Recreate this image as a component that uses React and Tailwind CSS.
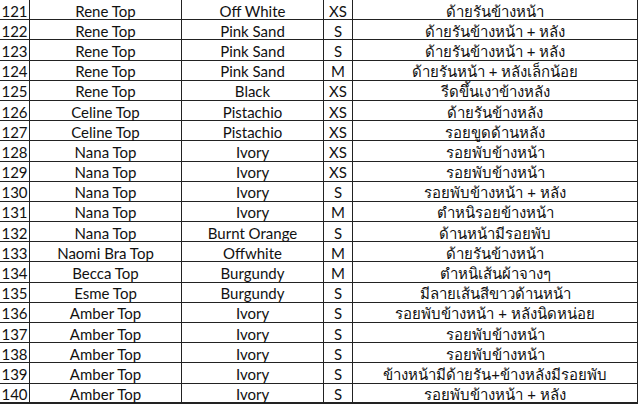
const rows = [
  [121, 'Rene Top', 'Off White', 'XS', 'ด้ายรันข้างหน้า'],
  [122, 'Rene Top', 'Pink Sand', 'S', 'ด้ายรันข้างหน้า + หลัง'],
  [123, 'Rene Top', 'Pink Sand', 'S', 'ด้ายรันข้างหน้า + หลัง'],
  [124, 'Rene Top', 'Pink Sand', 'M', 'ด้ายรันหน้า + หลังเล็กน้อย'],
  [125, 'Rene Top', 'Black', 'XS', 'รีดขึ้นเงาข้างหลัง'],
  [126, 'Celine Top', 'Pistachio', 'XS', 'ด้ายรันข้างหลัง'],
  [127, 'Celine Top', 'Pistachio', 'XS', 'รอยขูดด้านหลัง'],
  [128, 'Nana Top', 'Ivory', 'XS', 'รอยพับข้างหน้า'],
  [129, 'Nana Top', 'Ivory', 'XS', 'รอยพับข้างหน้า'],
  [130, 'Nana Top', 'Ivory', 'S', 'รอยพับข้างหน้า + หลัง'],
  [131, 'Nana Top', 'Ivory', 'M', 'ตำหนิรอยข้างหน้า'],
  [132, 'Nana Top', 'Burnt Orange', 'S', 'ด้านหน้ามีรอยพับ'],
  [133, 'Naomi Bra Top', 'Offwhite', 'M', 'ด้ายรันข้างหน้า'],
  [134, 'Becca Top', 'Burgundy', 'M', 'ตำหนิเส้นผ้าจางๆ'],
  [135, 'Esme Top', 'Burgundy', 'S', 'มีลายเส้นสีขาวด้านหน้า'],
  [136, 'Amber Top', 'Ivory', 'S', 'รอยพับข้างหน้า + หลังนิดหน่อย'],
  [137, 'Amber Top', 'Ivory', 'S', 'รอยพับข้างหน้า'],
  [138, 'Amber Top', 'Ivory', 'S', 'รอยพับข้างหน้า'],
  [139, 'Amber Top', 'Ivory', 'S', 'ข้างหน้ามีด้ายรัน+ข้างหลังมีรอยพับ'],
  [140, 'Amber Top', 'Ivory', 'S', 'รอยพับข้างหน้า + หลัง'],
]

// excel-ish sheet, 5 columns, no header row
export default function App() {
  return (
    <div className="w-[640px] h-[406px] overflow-hidden bg-white text-[15px] text-[#111] font-['Lato','Noto_Sans',sans-serif]">
      <div className="w-[638px]">
        {rows.map((r, i) => (
          <div
            key={r[0]}
            className={`grid grid-cols-[30px_152px_142px_29px_285px] h-[20.2px] leading-none border-[#222] ${i === rows.length - 1 ? 'border-b-2' : 'border-b'}`}
          >
            <div className="flex items-center justify-center pt-[3px] border-r border-[#222]">{r[0]}</div>
            <div className="flex items-center justify-center pt-[3px] border-r border-[#222]">{r[1]}</div>
            <div className="flex items-center justify-center pt-[3px] border-r border-[#222]">{r[2]}</div>
            <div className="flex items-center justify-center pt-[3px] border-r border-[#222]">{r[3]}</div>
            <div className="flex items-center justify-center pt-[3px] border-r border-[#222]">{r[4]}</div>
          </div>
        ))}
      </div>
    </div>
  )
}
